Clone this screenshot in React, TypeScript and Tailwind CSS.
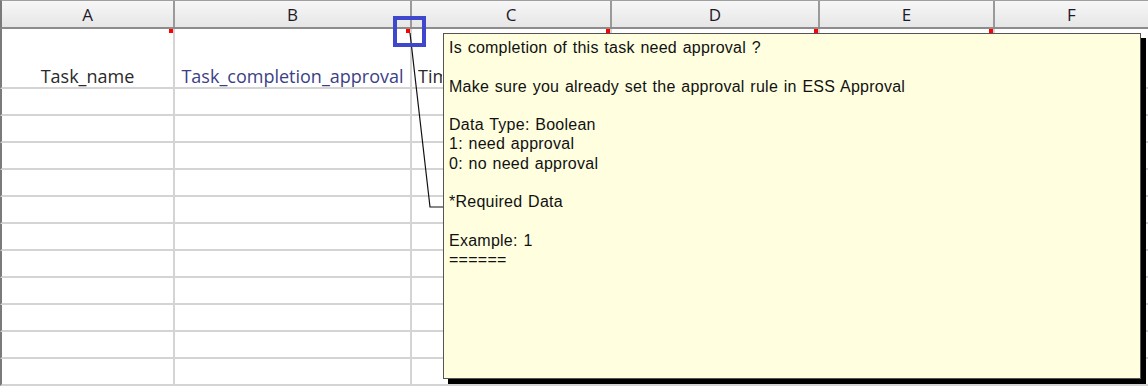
import React from "react";

const cols = [
  { key: "A", w: 175 },
  { key: "B", w: 237 },
  { key: "C", w: 200 },
  { key: "D", w: 208 },
  { key: "E", w: 175 },
  { key: "F", w: 153 },
];

const rowCount = 11;

export default function App() {
  return (
    <div className="relative w-[1148px] h-[387px] overflow-hidden bg-white [font-family:'Open_Sans',sans-serif]">
      {/* header */}
      <div className="flex h-[29px] border-t border-[#a0a0a0] border-b-2 border-b-[#8c8c8c] border-l-2 border-l-[#7a7a7a] bg-gradient-to-b from-[#f7f7f7] to-[#e6e6e6]">
        {cols.map((c, i) => (
          <div
            key={c.key}
            className={`flex items-center justify-center text-[17px] leading-none text-[#1e1a2a] ${i < cols.length - 1 ? "border-r-2 border-r-[#9a9a9a]" : ""}`}
            style={{ width: i === 0 ? c.w - 2 : c.w }}
          >
            {c.key}
          </div>
        ))}
      </div>
      {/* first tall row */}
      <div className="flex h-[60px] border-b-2 border-b-[#d4d4d4] border-l-2 border-l-[#7a7a7a]">
        {cols.map((c, i) => (
          <div
            key={c.key}
            className={`relative flex items-end justify-center pb-[1px] text-[18px] leading-[20px] whitespace-nowrap overflow-hidden ${i < cols.length - 1 ? "border-r-2 border-r-[#d4d4d4]" : ""}`}
            style={{ width: i === 0 ? c.w - 2 : c.w }}
          >
            {i === 0 && <span className="text-[#2a2a2a]">Task_name</span>}
            {i === 1 && <span className="text-[#3b3f86]">Task_completion_approval</span>}
            {i === 2 && (
              <div className="w-full pl-[6px] text-left">
                <span className="block w-[24px] overflow-hidden text-[#2a2a2a]">Time_limit</span>
              </div>
            )}
            {i < 5 && <div className="absolute right-0 top-0 w-[4px] h-[4px] bg-[#ff0000]" />}
          </div>
        ))}
      </div>
      {Array.from({ length: rowCount }).map((_, r) => (
        <div key={r} className="flex h-[27px] border-b-2 border-b-[#d4d4d4] border-l-2 border-l-[#7a7a7a]">
          {cols.map((c, i) => (
            <div
              key={c.key}
              className={i < cols.length - 1 ? "border-r-2 border-r-[#d4d4d4]" : ""}
              style={{ width: i === 0 ? c.w - 2 : c.w }}
            />
          ))}
        </div>
      ))}

      {/* connector line */}
      <svg className="absolute left-0 top-0 pointer-events-none" width="1148" height="387">
        <polyline points="410,33 430,207 444,207" fill="none" stroke="#111" strokeWidth="1.2" />
      </svg>

      {/* comment box shadow */}
      <div className="absolute left-[448px] top-[38px] w-[698px] h-[346px] bg-black" />
      {/* comment box */}
      <div className="absolute left-[443px] top-[33px] w-[698px] h-[346px] bg-[#ffffe0] border border-[#555] pl-[5px] pt-[4px] text-[16px] leading-[19.3px] tracking-[0.25px] [word-spacing:1px] text-[#111] [font-family:'Liberation_Sans',Arial,sans-serif]">
        <div>Is completion of this task need approval ?</div>
        <div>&nbsp;</div>
        <div>Make sure you already set the approval rule in ESS Approval</div>
        <div>&nbsp;</div>
        <div>Data Type: Boolean</div>
        <div>1: need approval</div>
        <div>0: no need approval</div>
        <div>&nbsp;</div>
        <div>*Required Data</div>
        <div>&nbsp;</div>
        <div>Example: 1</div>
        <div>======</div>
      </div>

      {/* blue highlight box */}
      <div className="absolute left-[393px] top-[16px] w-[33px] h-[31px] border-4 border-[#3f48cc]" />
    </div>
  );
}
